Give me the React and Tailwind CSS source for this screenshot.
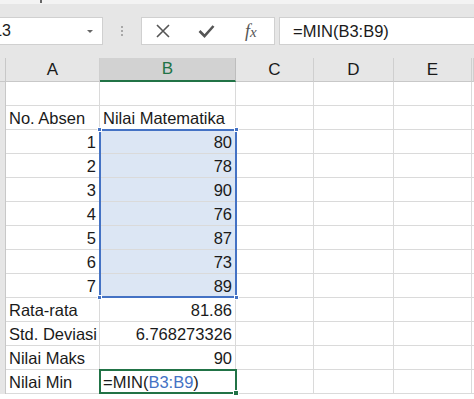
import React from 'react';

const cols = ['A', 'B', 'C', 'D', 'E', ''];

const rows = [
  ['', ''],
  ['No. Absen', 'Nilai Matematika', 'left', 'left'],
  ['1', '80'],
  ['2', '78'],
  ['3', '90'],
  ['4', '76'],
  ['5', '87'],
  ['6', '73'],
  ['7', '89'],
  ['Rata-rata', '81.86', 'left'],
  ['Std. Deviasi', '6.768273326', 'left'],
  ['Nilai Maks', '90', 'left'],
  ['Nilai Min', 'formula', 'left', 'left'],
];

const gridCls = 'grid grid-cols-[6px_94px_136px_78px_80px_78px_1fr]';

const Cell = ({ children, align = 'right', className = '' }) => (
  <div
    className={`h-6 border-r border-b border-[#dadada] flex items-end pb-[3px] px-[3px] overflow-visible whitespace-nowrap leading-none ${
      align === 'left' ? 'justify-start' : 'justify-end'
    } ${className}`}
  >
    {children}
  </div>
);

const Handle = ({ className }) => (
  <div className={`absolute w-[5px] h-[5px] bg-[#4472c4] border border-white ${className}`} />
);

export default function App() {
  return (
    <div
      className="w-[474px] h-[399px] overflow-hidden bg-white text-[16.5px] text-[#1a1a1a]"
      style={{ fontFamily: '"Liberation Sans", Arial, sans-serif' }}
    >
      {/* formula bar */}
      <div className="bg-[#e6e6e6] h-[58px] relative">
        <div className="h-1 bg-[#f3f3f3] relative">
          <div className="absolute left-[40px] top-0 w-[2px] h-[3px] bg-[#666]" />
        </div>
        <div className="flex items-start pt-[13px] h-full">
          <div className="w-[103px] h-[28px] bg-white border border-[#d0d0d0] border-l-0 flex items-center justify-between overflow-hidden">
            <span className="ml-[-7px] text-[16px]">L3</span>
            <svg width="8" height="5" viewBox="0 0 8 5" className="mr-[8px]">
              <path d="M1 1 L4 4 L7 1 Z" fill="#666" />
            </svg>
          </div>
          <div className="w-[38px] h-[28px] flex flex-col items-center justify-center gap-[2px]">
            <div className="w-[2px] h-[2px] bg-[#a8a8a8]" />
            <div className="w-[2px] h-[2px] bg-[#a8a8a8]" />
            <div className="w-[2px] h-[2px] bg-[#a8a8a8]" />
          </div>
          <div className="w-[134px] h-[28px] bg-white border border-[#d0d0d0] flex items-center pl-[14px]">
            <svg width="14" height="14" viewBox="0 0 14 14">
              <path d="M1 1 L13 13 M13 1 L1 13" stroke="#555" strokeWidth="1.6" />
            </svg>
            <svg width="17" height="14" viewBox="0 0 17 14" className="ml-[28px]">
              <path d="M1.5 7 L6.5 12 L15.5 2" stroke="#555" strokeWidth="2.6" fill="none" />
            </svg>
            <span
              className="ml-[30px] italic text-[18px] text-[#555] leading-none"
              style={{ fontFamily: '"Liberation Serif", "Times New Roman", serif' }}
            >
              f<span className="text-[15px]">x</span>
            </span>
          </div>
          <div className="ml-[4px] flex-1 h-[28px] bg-white border border-[#d0d0d0] border-r-0 flex items-center pl-[13px] text-[16.5px]">
            =MIN(B3:B9)
          </div>
        </div>
      </div>

      {/* sheet */}
      <div className="relative">
        <div className={gridCls}>
          <div className="h-6 bg-[#e6e6e6] border-r border-b border-[#c8c8c8]" />
          {cols.map((c, i) => (
            <div
              key={i}
              className={`h-6 flex items-center justify-center border-r text-[17px] ${
                c === 'B'
                  ? 'bg-[#d2d2d2] border-b-2 border-b-[#217346] text-[#217346] border-r-[#bdbdbd]'
                  : 'bg-[#e6e6e6] border-b border-b-[#c8c8c8] border-r-[#cfcfcf]'
              }`}
            >
              {c}
            </div>
          ))}
        </div>
        {rows.map((r, i) => (
          <div key={i} className={gridCls}>
            <div className="h-6 bg-[#e6e6e6] border-r border-[#c8c8c8]" />
            <Cell align={r[2] || 'right'}>{r[0]}</Cell>
            <Cell
              align={r[3] || 'right'}
              className={i >= 2 && i <= 8 ? 'bg-[#dce6f4]' : ''}
            >
              {r[1] === 'formula' ? (
                <span>
                  =MIN(<span className="text-[#4472c4]">B3:B9</span>)
                </span>
              ) : (
                r[1]
              )}
            </Cell>
            <Cell />
            <Cell />
            <Cell />
            <Cell />
          </div>
        ))}

        {/* selection B3:B9 */}
        <div className="absolute left-[99px] top-[71px] w-[138px] h-[169px] border-2 border-[#4472c4] pointer-events-none">
          <Handle className="left-[-4px] top-[-4px]" />
          <Handle className="right-[-4px] top-[-4px]" />
          <Handle className="left-[-4px] bottom-[-4px]" />
          <Handle className="right-[-4px] bottom-[-4px]" />
        </div>

        {/* active cell B12 */}
        <div className="absolute left-[99px] top-[311px] w-[138px] h-[25px] border-2 border-[#217346] pointer-events-none">
          <div className="absolute right-[-4px] bottom-[-4px] w-[6px] h-[6px] bg-[#217346] border border-white" />
        </div>
      </div>
    </div>
  );
}
